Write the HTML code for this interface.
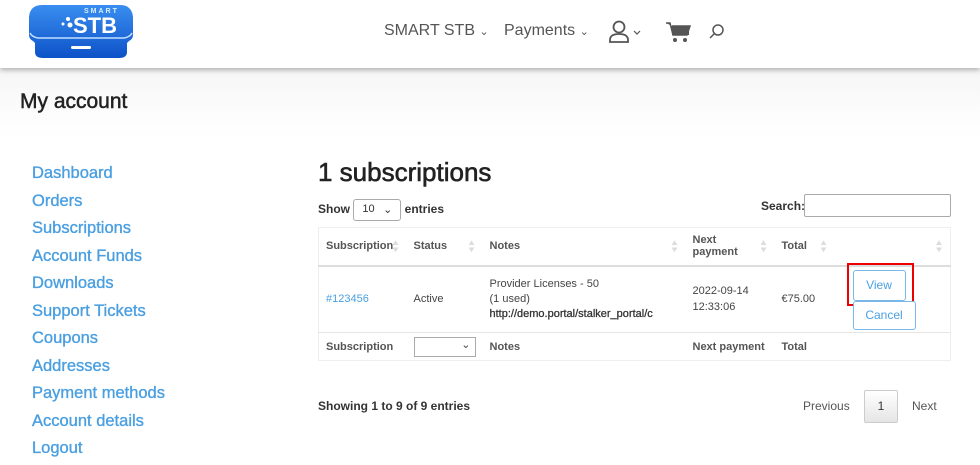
<!DOCTYPE html>
<html><head><meta charset="utf-8"><style>
*{box-sizing:border-box;margin:0;padding:0}
body{width:980px;height:463px;overflow:hidden;background:#fff;font-family:"Liberation Sans",Arial,sans-serif;color:#333;position:relative}
.hdr{position:absolute;left:0;top:0;width:980px;height:68px;background:#fff;box-shadow:0 2px 5px rgba(0,0,0,.3)}
.band{position:absolute;left:0;top:68px;width:980px;height:70px;background:linear-gradient(#f6f6f6,#fff)}
.nav{position:absolute;top:22px;font-size:16px;color:#555}
h1{position:absolute;left:20px;top:90px;font-size:21px;font-weight:normal;color:#222;-webkit-text-stroke:.5px #222}
.side{position:absolute;left:32px;top:162px}
.side a{display:block;color:#4a9fe0;font-size:16.5px;height:27.5px;line-height:22px;text-decoration:none;-webkit-text-stroke:.35px #4a9fe0}
h2{position:absolute;left:318px;top:157px;font-size:26px;font-weight:normal;color:#222;-webkit-text-stroke:.6px #222}
.sm{font-size:12px;color:#333}
table{position:absolute;left:318px;top:227px;width:633px;border-collapse:collapse;font-size:11px;color:#444;border:1px solid #eee}
td,th{padding:0 7px;text-align:left;vertical-align:middle}
th{font-weight:bold;color:#555}
.s{position:relative}
.s:after{content:"";position:absolute;right:8px;top:50%;margin-top:-6px;width:6px;height:12px;background:#ddd;clip-path:polygon(50% 0,100% 40%,0 40%,0 60%,100% 60%,50% 100%,0 60%,0 40%)}
.btn{display:block;border:1px solid #7ab8ea;border-radius:3px;color:#4a9fe0;font-size:12px;text-align:center;background:#fff}
</style></head><body>
<div class="band"></div>
<div class="hdr">
<svg style="position:absolute;left:26px;top:2px" width="110" height="58" viewBox="0 0 110 58">
<defs><linearGradient id="g" x1="0" y1="0" x2="0" y2="1"><stop offset="0" stop-color="#3a8ef0"/><stop offset="1" stop-color="#0d52c8"/></linearGradient></defs>
<path d="M16 3h78q12 0 13 12v18q0 4-4 6l-2 2v9q0 6-8 6H17q-8 0-8-6v-9l-2-2q-4-2-4-6V15Q4 3 16 3z" fill="url(#g)"/>
<path d="M4 31q2 4 8 5h86q6-1 8-5" stroke="#bfe0ff" stroke-width="1.5" fill="none"/>
<rect x="45" y="44" width="20" height="3" rx="1.5" fill="#fff"/>
<text x="58" y="11" font-size="7" font-weight="bold" fill="#dbeeff" letter-spacing="2" font-family="Liberation Sans">SMART</text>
<text x="47" y="31" font-size="22" font-weight="bold" fill="#fff" font-family="Liberation Sans">STB</text>
<circle cx="42" cy="17" r="2" fill="#fff"/><circle cx="37" cy="22" r="1.5" fill="#fff"/><circle cx="44" cy="23" r="2.5" fill="#fff"/>
</svg>
<span class="nav" style="left:384px">SMART STB <span style="font-size:11px">⌄</span></span>
<span class="nav" style="left:504px">Payments <span style="font-size:11px">⌄</span></span>
<svg style="position:absolute;left:608px;top:20px" width="36" height="24"><circle cx="11" cy="7" r="5.5" fill="none" stroke="#555" stroke-width="1.8"/><path d="M2 22v-2q0-6 9-6t9 6v2z" fill="none" stroke="#555" stroke-width="1.8"/><path d="M26 11l3 3 3-3" fill="none" stroke="#555" stroke-width="1.2"/></svg>
<svg style="position:absolute;left:666px;top:21px" width="26" height="22"><path d="M0 2h4l3 12h14l3-9H6" fill="#555" stroke="#555" stroke-width="1.5"/><rect x="6" y="5" width="17" height="9" fill="#555"/><circle cx="9" cy="19" r="2" fill="#555"/><circle cx="19" cy="19" r="2" fill="#555"/></svg>
<svg style="position:absolute;left:708px;top:23px" width="18" height="18"><circle cx="10" cy="7" r="5" fill="none" stroke="#555" stroke-width="1.5"/><path d="M6.5 10.5L2 15" stroke="#555" stroke-width="1.5"/></svg>
</div>
<h1>My account</h1>
<div class="side"><a>Dashboard</a><a>Orders</a><a>Subscriptions</a><a>Account Funds</a><a>Downloads</a><a>Support Tickets</a><a>Coupons</a><a>Addresses</a><a>Payment methods</a><a>Account details</a><a>Logout</a></div>
<h2>1 subscriptions</h2>
<div class="sm" style="position:absolute;left:318px;top:199px;font-weight:bold">Show <span style="display:inline-block;width:48px;height:22px;border:1px solid #aaa;border-radius:3px;vertical-align:middle;padding:3px 8px;font-size:11px;font-weight:normal">10 <span style="float:right">⌄</span></span> entries</div>
<div class="sm" style="position:absolute;left:761px;top:199px;font-weight:bold">Search:</div>
<div style="position:absolute;left:804px;top:194px;width:147px;height:23px;border:1px solid #aaa;border-radius:2px"></div>
<table>
<tr style="height:38px;border-bottom:2px solid #ddd"><th class="s" style="width:88px">Subscription</th><th class="s" style="width:76px">Status</th><th class="s" style="width:203px">Notes</th><th class="s" style="width:89px">Next<br>payment</th><th class="s" style="width:60px">Total</th><th class="s"></th></tr>
<tr style="height:67px;border-bottom:1px solid #e5e5e5"><td style="color:#4a9fe0">#123456</td><td>Active</td><td style="line-height:15px">Provider Licenses - 50<br>(1 used)<br><span style="-webkit-text-stroke:.3px #333;color:#333">http://demo.portal/stalker_portal/c</span></td><td style="line-height:16px">2022-09-14<br>12:33:06</td><td>€75.00</td><td style="position:relative">
<div style="position:absolute;left:12px;top:-4px;width:67px;height:43px;border:2px solid #e00"></div>
<span class="btn" style="position:absolute;left:18px;top:3px;width:53px;height:31px;line-height:29px">View</span>
<span class="btn" style="position:absolute;left:18px;top:34px;width:63px;height:29px;line-height:27px">Cancel</span></td></tr>
<tr style="height:28px"><th>Subscription</th><td><span style="display:inline-block;width:62px;height:20px;border:1px solid #aaa;vertical-align:middle;text-align:right;padding-right:4px;font-size:11px">⌄</span></td><th>Notes</th><th>Next payment</th><th>Total</th><td></td></tr>
</table>
<div class="sm" style="position:absolute;left:318px;top:399px;font-weight:bold">Showing 1 to 9 of 9 entries</div>
<div style="position:absolute;left:803px;top:399px;font-size:12px;color:#555">Previous</div>
<div style="position:absolute;left:864px;top:390px;width:34px;height:33px;border:1px solid #ccc;border-radius:2px;background:linear-gradient(#fff,#e5e5e5);text-align:center;line-height:31px;font-size:12px">1</div>
<div style="position:absolute;left:912px;top:399px;font-size:12px;color:#555">Next</div>
</body></html>
